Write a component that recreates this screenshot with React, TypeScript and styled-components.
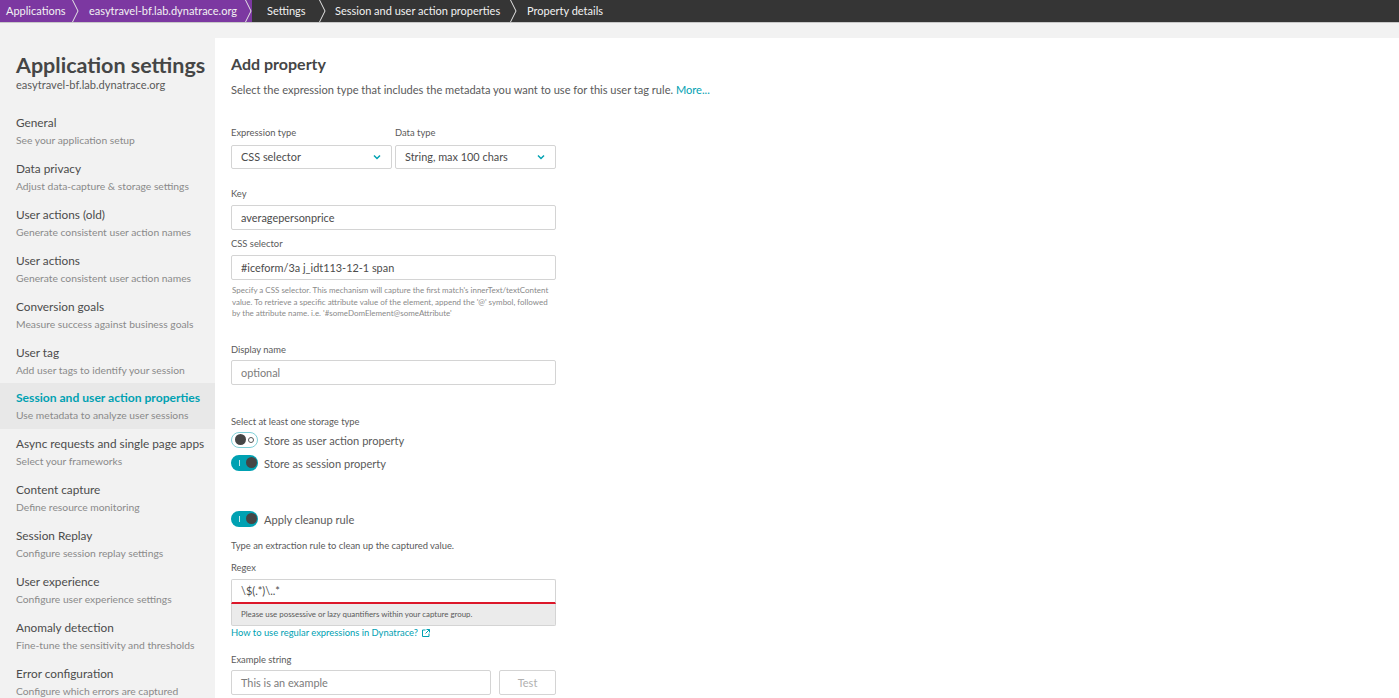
import React from "react";
import styled, { createGlobalStyle } from "styled-components";

const Global = createGlobalStyle`
  html, body { margin: 0; padding: 0; height: 100%; overflow: hidden; background: #f2f2f2; }
  body { font-family: "Lato", "Open Sans", "Liberation Sans", sans-serif; color: #454646; }
  * { box-sizing: border-box; }
`;

const Page = styled.div`
  width: 1399px;
  height: 698px;
  overflow: hidden;
  display: flex;
  flex-direction: column;
`;

const Breadcrumbs = styled.nav`
  height: 23px;
  flex: none;
  display: flex;
  background: #353535;
  border-bottom: 1px solid #c8c8c8;
`;

const Crumb = styled.div<{ $purple?: boolean; $first?: boolean; $w: number }>`
  display: flex;
  align-items: center;
  justify-content: space-between;
  width: ${(p) => p.$w}px;
  height: 22px;
  padding-left: ${(p) => (p.$first ? 6 : 10)}px;
  background: ${(p) => (p.$purple ? "#7c38a1" : "#353535")};
  color: #f2f2f2;
  font-size: 11px;
  white-space: nowrap;
`;

const CrumbLabel = styled.span<{ $inset?: number }>`
  margin-left: ${(p) => p.$inset ?? 0}px;
  margin-bottom: 2px;
`;

const Chevron = ({ fill }: { fill: string }) => (
  <svg width="7" height="22" viewBox="0 0 7 22" style={{ flex: "none" }}>
    <path d="M0 0 L6 11 L0 22 Z" fill={fill} />
    <path d="M0.5 0 L6 11 L0.5 22" fill="none" stroke="#e6e6e6" strokeWidth="1" />
  </svg>
);

const Body = styled.div`
  flex: 1;
  display: flex;
  min-height: 0;
`;

const Sidebar = styled.aside`
  width: 215px;
  flex: none;
  padding-top: 27px;
`;

const AppTitle = styled.h1`
  margin: 0 0 0 16px;
  font-size: 21.5px;
  line-height: 30px;
  font-weight: 700;
  color: #454646;
  white-space: nowrap;
`;

const AppHost = styled.div`
  margin-left: 16px;
  font-size: 11.1px;
  line-height: 10px;
  color: #5a5a5a;
  margin-bottom: 18px;
`;

const NavItem = styled.div<{ $active?: boolean }>`
  height: 45.92px;
  padding: 7px 0 0 16px;
  background: ${(p) => (p.$active ? "#e8e8e8" : "transparent")};
  white-space: nowrap;
`;

const NavName = styled.div<{ $active?: boolean }>`
  font-size: ${(p) => (p.$active ? 12.1 : 11.8)}px;
  line-height: 16px;
  font-weight: ${(p) => (p.$active ? 700 : 400)};
  color: ${(p) => (p.$active ? "#00a1b2" : "#4c4c4c")};
`;

const NavSub = styled.div`
  margin-top: 1px;
  font-size: 10.3px;
  line-height: 16px;
  color: #8a8a8a;
`;

const Main = styled.main`
  flex: 1;
  margin-top: 15px;
  background: #fff;
  padding: 0 16px;
  overflow: hidden;
`;

const Heading = styled.h2`
  margin: 16px 0 0;
  font-size: 16px;
  line-height: 20px;
  font-weight: 700;
  color: #454646;
`;

const Intro = styled.p`
  margin: 8px 0 0;
  font-size: 11.07px;
  line-height: 16px;
  color: #5a5a5a;
`;

const Link = styled.a`
  color: #00a1b2;
`;

const Form = styled.div`
  width: 325px;
`;

const Label = styled.div<{ $top: number; $gap?: number }>`
  margin-top: ${(p) => p.$top}px;
  margin-bottom: ${(p) => p.$gap ?? 5}px;
  font-size: 9.4px;
  line-height: 12px;
  color: #5a5a5a;
  white-space: nowrap;
`;

const SelectRow = styled.div`
  display: flex;
  gap: 3px;
  margin-top: 29px;
`;

const SelectCol = styled.div`
  flex: 1;
`;

const SelectBox = styled.div`
  height: 24px;
  border: 1px solid #d4d4d4;
  border-radius: 2px;
  padding: 0 10px 2px 9px;
  display: flex;
  align-items: center;
  justify-content: space-between;
  font-size: 10.9px;
  color: #4c4c4c;
`;

const CaretSlot = styled.span`
  display: flex;
  margin-top: 2px;
`;

const Input = styled.div<{ $placeholder?: boolean; $grow?: boolean; $flat?: boolean }>`
  height: 25px;
  border: 1px solid #d4d4d4;
  border-radius: ${(p) => (p.$flat ? "2px 2px 0 0" : "2px")};
  padding: 0 9px;
  display: flex;
  align-items: center;
  font-size: 10.9px;
  color: ${(p) => (p.$placeholder ? "#7c7c7c" : "#4c4c4c")};
  ${(p) => (p.$grow ? "flex: 1;" : "")}
  ${(p) => (p.$flat ? "border-bottom: 2px solid #dc172a;" : "")}
`;

const Help = styled.p`
  margin: 5px 0 0 1px;
  font-size: 7.97px;
  line-height: 11.6px;
  color: #8a8a8a;
  white-space: nowrap;
`;

const ToggleRow = styled.div<{ $top: number }>`
  display: flex;
  align-items: center;
  gap: 6px;
  height: 16px;
  margin-top: ${(p) => p.$top}px;
  font-size: 11.1px;
  color: #5a5a5a;
`;

const ToggleText = styled.span`
  margin-top: 1px;
`;

const Track = styled.span<{ $on?: boolean }>`
  position: relative;
  display: block;
  width: 27px;
  height: 16px;
  flex: none;
  border-radius: 8px;
  background: ${(p) => (p.$on ? "#00a1b2" : "#fff")};
  border: ${(p) => (p.$on ? "none" : "1px solid #7fd0d8")};
`;

const Knob = styled.span<{ $on?: boolean }>`
  position: absolute;
  top: ${(p) => (p.$on ? 2 : 1)}px;
  left: ${(p) => (p.$on ? 15 : 3)}px;
  width: 11px;
  height: 11px;
  border-radius: 50%;
  background: #454646;
`;

const OffMark = styled.span`
  position: absolute;
  top: 4px;
  right: 3px;
  width: 6px;
  height: 6px;
  border-radius: 50%;
  border: 1px solid #555;
`;

const OnMark = styled.span`
  position: absolute;
  top: 5px;
  left: 8px;
  width: 1px;
  height: 6px;
  background: #bfe8ec;
`;

const Toggle = ({ on }: { on?: boolean }) => (
  <Track $on={on}>
    {on ? <OnMark /> : <OffMark />}
    <Knob $on={on} />
  </Track>
);

const Plain = styled.div`
  margin-top: 13px;
  font-size: 9.4px;
  line-height: 12px;
  color: #5a5a5a;
`;

const ErrorBox = styled.div`
  height: 22px;
  background: #ebebeb;
  border: 1px solid #d4d4d4;
  border-top: none;
  border-radius: 0 0 2px 2px;
  padding-left: 9px;
  display: flex;
  align-items: center;
  font-size: 7.9px;
  color: #5a5a5a;
`;

const HowTo = styled.a`
  display: flex;
  align-items: center;
  gap: 4px;
  height: 12px;
  margin-top: 1px;
  font-size: 9.4px;
  color: #00a1b2;
`;

const TestRow = styled.div`
  display: flex;
  gap: 8px;
`;

const TestButton = styled.div`
  width: 57px;
  height: 25px;
  border: 1px solid #d4d4d4;
  border-radius: 2px;
  display: flex;
  align-items: center;
  justify-content: center;
  font-size: 11px;
  color: #b0b0b0;
`;

const Caret = () => (
  <CaretSlot>
    <svg width="8" height="6" viewBox="0 0 8 6">
      <path d="M1 1.5 L4 4.5 L7 1.5" fill="none" stroke="#00a1b2" strokeWidth="1.5" />
    </svg>
  </CaretSlot>
);

const External = () => (
  <svg width="8" height="8" viewBox="0 0 8 8">
    <path d="M3.5 1 H0.5 V7.5 H7 V4.5" fill="none" stroke="#00a1b2" strokeWidth="1" />
    <path d="M4.5 0.5 H7.5 V3.5 M7.5 0.5 L3.5 4.5" fill="none" stroke="#00a1b2" strokeWidth="1" />
  </svg>
);

const nav: [string, string][] = [
  ["General", "See your application setup"],
  ["Data privacy", "Adjust data-capture & storage settings"],
  ["User actions (old)", "Generate consistent user action names"],
  ["User actions", "Generate consistent user action names"],
  ["Conversion goals", "Measure success against business goals"],
  ["User tag", "Add user tags to identify your session"],
  ["Session and user action properties", "Use metadata to analyze user sessions"],
  ["Async requests and single page apps", "Select your frameworks"],
  ["Content capture", "Define resource monitoring"],
  ["Session Replay", "Configure session replay settings"],
  ["User experience", "Configure user experience settings"],
  ["Anomaly detection", "Fine-tune the sensitivity and thresholds"],
  ["Error configuration", "Configure which errors are captured"],
];

export default function App() {
  return (
    <Page>
      <Global />
      <Breadcrumbs>
        <Crumb $purple $first $w={79}><CrumbLabel>Applications</CrumbLabel><Chevron fill="#7c38a1" /></Crumb>
        <Crumb $purple $w={173}><CrumbLabel>easytravel-bf.lab.dynatrace.org</CrumbLabel><Chevron fill="#7c38a1" /></Crumb>
        <Crumb $w={74}><CrumbLabel $inset={5}>Settings</CrumbLabel><Chevron fill="#353535" /></Crumb>
        <Crumb $w={191}><CrumbLabel $inset={-1}>Session and user action properties</CrumbLabel><Chevron fill="#353535" /></Crumb>
        <Crumb $w={100}><CrumbLabel>Property details</CrumbLabel></Crumb>
      </Breadcrumbs>
      <Body>
        <Sidebar>
          <AppTitle>Application settings</AppTitle>
          <AppHost>easytravel-bf.lab.dynatrace.org</AppHost>
          {nav.map(([name, sub]) => {
            const active = name.startsWith("Session and");
            return (
              <NavItem key={name} $active={active}>
                <NavName $active={active}>{name}</NavName>
                <NavSub>{sub}</NavSub>
              </NavItem>
            );
          })}
        </Sidebar>
        <Main>
          <Heading>Add property</Heading>
          <Intro>
            Select the expression type that includes the metadata you want to use for this user tag rule. <Link>More...</Link>
          </Intro>
          <Form>
            <SelectRow>
              <SelectCol>
                <Label $top={0} $gap={6}>Expression type</Label>
                <SelectBox>CSS selector<Caret /></SelectBox>
              </SelectCol>
              <SelectCol>
                <Label $top={0} $gap={6}>Data type</Label>
                <SelectBox>String, max 100 chars<Caret /></SelectBox>
              </SelectCol>
            </SelectRow>
            <Label $top={19}>Key</Label>
            <Input>averagepersonprice</Input>
            <Label $top={8}>CSS selector</Label>
            <Input>#iceform/3a j_idt113-12-1 span</Input>
            <Help>
              Specify a CSS selector. This mechanism will capture the first match's innerText/textContent<br />
              value. To retrieve a specific attribute value of the element, append the '@' symbol, followed<br />
              by the attribute name. i.e. '#someDomElement@someAttribute'
            </Help>
            <Label $top={24} $gap={4}>Display name</Label>
            <Input $placeholder>optional</Input>
            <Label $top={31} $gap={5}>Select at least one storage type</Label>
            <ToggleRow $top={-1}><Toggle /><ToggleText>Store as user action property</ToggleText></ToggleRow>
            <ToggleRow $top={7}><Toggle on /><ToggleText>Store as session property</ToggleText></ToggleRow>
            <ToggleRow $top={40}><Toggle on /><ToggleText>Apply cleanup rule</ToggleText></ToggleRow>
            <Plain>Type an extraction rule to clean up the captured value.</Plain>
            <Label $top={10}>Regex</Label>
            <Input $flat>\$(.*)\..*</Input>
            <ErrorBox>Please use possessive or lazy quantifiers within your capture group.</ErrorBox>
            <HowTo>How to use regular expressions in Dynatrace? <External /></HowTo>
            <Label $top={15} $gap={4}>Example string</Label>
            <TestRow>
              <Input $placeholder $grow>This is an example</Input>
              <TestButton>Test</TestButton>
            </TestRow>
          </Form>
        </Main>
      </Body>
    </Page>
  );
}
